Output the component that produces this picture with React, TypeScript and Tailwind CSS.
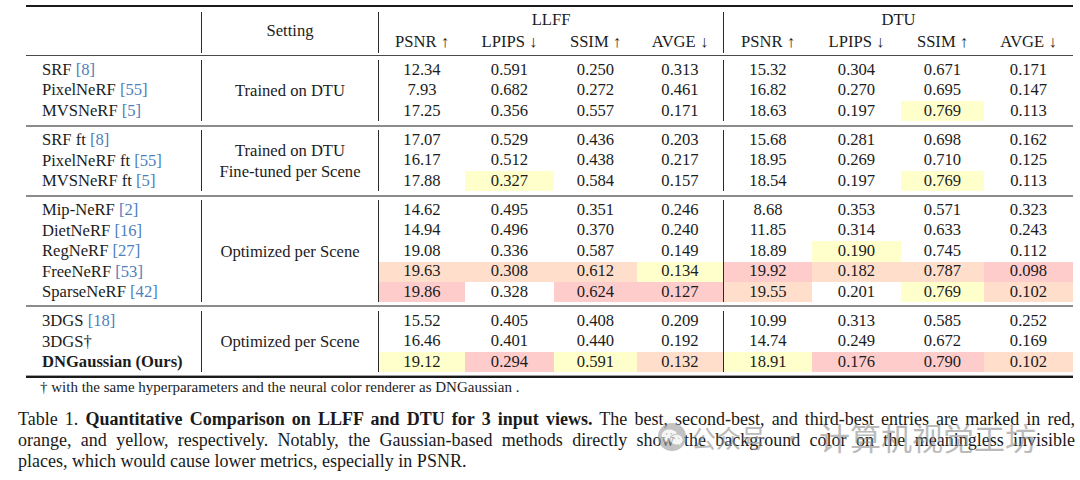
import React from "react";

type Mark = "" | "r" | "o" | "y";

const markBg: Record<Mark, string> = {
  "": "",
  r: "bg-[#ffcccc]",
  o: "bg-[#ffdfcc]",
  y: "bg-[#ffffcc]",
};

interface Row {
  name: React.ReactNode;
  llff: string[];
  dtu: string[];
}

interface Section {
  setting: React.ReactNode;
  rows: Row[];
  pt: string;
  pb: string;
}

const Ref = ({ n }: { n: string }) => <span className="text-[#4d7fbd]">[{n}]</span>;

const sections: Section[] = [
  {
    setting: "Trained on DTU",
    pt: "pt-[4px]",
    pb: "pb-[4px]",
    rows: [
      { name: <>SRF <Ref n="8" /></>, llff: ["12.34", "0.591", "0.250", "0.313"], dtu: ["15.32", "0.304", "0.671", "0.171"] },
      { name: <>PixelNeRF <Ref n="55" /></>, llff: ["7.93", "0.682", "0.272", "0.461"], dtu: ["16.82", "0.270", "0.695", "0.147"] },
      { name: <>MVSNeRF <Ref n="5" /></>, llff: ["17.25", "0.356", "0.557", "0.171"], dtu: ["18.63", "0.197", "0.769:y", "0.113"] },
    ],
  },
  {
    setting: (
      <>
        Trained on DTU
        <br />
        Fine-tuned per Scene
      </>
    ),
    pt: "pt-[3px]",
    pb: "pb-[4px]",
    rows: [
      { name: <>SRF ft <Ref n="8" /></>, llff: ["17.07", "0.529", "0.436", "0.203"], dtu: ["15.68", "0.281", "0.698", "0.162"] },
      { name: <>PixelNeRF ft <Ref n="55" /></>, llff: ["16.17", "0.512", "0.438", "0.217"], dtu: ["18.95", "0.269", "0.710", "0.125"] },
      { name: <>MVSNeRF ft <Ref n="5" /></>, llff: ["17.88", "0.327:y", "0.584", "0.157"], dtu: ["18.54", "0.197", "0.769:y", "0.113"] },
    ],
  },
  {
    setting: "Optimized per Scene",
    pt: "pt-[3px]",
    pb: "pb-[3px]",
    rows: [
      { name: <>Mip-NeRF <Ref n="2" /></>, llff: ["14.62", "0.495", "0.351", "0.246"], dtu: ["8.68", "0.353", "0.571", "0.323"] },
      { name: <>DietNeRF <Ref n="16" /></>, llff: ["14.94", "0.496", "0.370", "0.240"], dtu: ["11.85", "0.314", "0.633", "0.243"] },
      { name: <>RegNeRF <Ref n="27" /></>, llff: ["19.08", "0.336", "0.587", "0.149"], dtu: ["18.89", "0.190:y", "0.745", "0.112"] },
      { name: <>FreeNeRF <Ref n="53" /></>, llff: ["19.63:o", "0.308:o", "0.612:o", "0.134:y"], dtu: ["19.92:r", "0.182:o", "0.787:o", "0.098:r"] },
      { name: <>SparseNeRF <Ref n="42" /></>, llff: ["19.86:r", "0.328", "0.624:r", "0.127:r"], dtu: ["19.55:o", "0.201", "0.769:y", "0.102:o"] },
    ],
  },
  {
    setting: "Optimized per Scene",
    pt: "pt-[4px]",
    pb: "pb-[3px]",
    rows: [
      { name: <>3DGS <Ref n="18" /></>, llff: ["15.52", "0.405", "0.408", "0.209"], dtu: ["10.99", "0.313", "0.585", "0.252"] },
      { name: <>3DGS†</>, llff: ["16.46", "0.401", "0.440", "0.192"], dtu: ["14.74", "0.249", "0.672", "0.169"] },
      { name: <span className="font-bold">DNGaussian (Ours)</span>, llff: ["19.12:y", "0.294:r", "0.591:y", "0.132:o"], dtu: ["18.91:y", "0.176:r", "0.790:r", "0.102:o"] },
    ],
  },
];

const Cell = ({ v }: { v: string }) => {
  const [val, m] = v.split(":");
  const mark = (m || "") as Mark;
  return (
    <div className={`h-[20.4px] flex items-center justify-center ${markBg[mark]}`}>{val}</div>
  );
};

const Sep = () => <div className="w-px shrink-0 bg-[#2a2a2a]" />;
const HSep = () => <div className="w-px shrink-0 bg-[#2a2a2a] mt-[5px] mb-[2px]" />;

const SubHead = ({ cols }: { cols: string }) => (
  <div className={`grid ${cols} leading-[22px] text-center`}>
    <div>PSNR ↑</div>
    <div>LPIPS ↓</div>
    <div>SSIM ↑</div>
    <div>AVGE ↓</div>
  </div>
);

const LLFF_COLS = "grid-cols-[86px_89px_83px_86px]";
const DTU_COLS = "grid-cols-[88px_89px_83px_89px]";

function WeChatIcon() {
  return (
    <svg width="30" height="30" viewBox="0 0 32 32" className="shrink-0">
      <circle cx="16" cy="16" r="15" fill="#9a9a9a" />
      <path
        d="M13 8c-4.4 0-8 2.9-8 6.5 0 2 1.1 3.8 2.9 5l-.7 2.3 2.7-1.4c1 .3 2 .4 3.1.4h.5c-.2-.6-.3-1.2-.3-1.8 0-3.6 3.4-6.4 7.7-6.4h.4C20.5 9.9 17.1 8 13 8z"
        fill="#ffffff"
        fillOpacity="0.85"
      />
      <path
        d="M21 13.5c-3.6 0-6.5 2.4-6.5 5.3s2.9 5.3 6.5 5.3c.8 0 1.5-.1 2.2-.3l2.2 1.2-.6-2c1.6-1 2.6-2.5 2.6-4.2 0-2.9-2.9-5.3-6.4-5.3z"
        fill="#ffffff"
        fillOpacity="0.85"
      />
      <circle cx="10.3" cy="12.6" r="1" fill="#9a9a9a" />
      <circle cx="15.2" cy="12.6" r="1" fill="#9a9a9a" />
      <circle cx="18.8" cy="17.6" r="0.8" fill="#9a9a9a" />
      <circle cx="23.2" cy="17.6" r="0.8" fill="#9a9a9a" />
    </svg>
  );
}

export default function App() {
  return (
    <div className="relative w-[1080px] h-[480px] overflow-hidden bg-white text-[#1c1c1c] font-['Liberation_Serif',serif]">
      <div className="pt-[5px]">
        <div className="ml-[26px] w-[1047px] text-[16.6px]">
          {/* top rule */}
          <div className="h-[2px] bg-[#1a1a1a]" />
          {/* header */}
          <div className="flex h-[48px]">
            <div className="w-[175px] shrink-0" />
            <HSep />
            <div className="w-[176px] shrink-0 flex items-center justify-center">Setting</div>
            <HSep />
            <div className="w-[344px] shrink-0 pt-[2px]">
              <div className="text-center leading-[22px]">LLFF</div>
              <SubHead cols={LLFF_COLS} />
            </div>
            <HSep />
            <div className="w-[349px] shrink-0 pt-[2px]">
              <div className="text-center leading-[22px]">DTU</div>
              <SubHead cols={DTU_COLS} />
            </div>
          </div>
          <div className="h-px bg-[#4a4a4a]" />

          {sections.map((s, si) => (
            <div key={si}>
              <div className={`${s.pt} ${s.pb}`}>
                <div className="flex">
                  <div className="w-[175px] shrink-0 pl-[16px]">
                    {s.rows.map((r, ri) => (
                      <div key={ri} className="h-[20.4px] leading-[20.4px] whitespace-nowrap">
                        {r.name}
                      </div>
                    ))}
                  </div>
                  <Sep />
                  <div className="w-[176px] shrink-0 flex items-center justify-center text-center leading-[21px]">
                    <div>{s.setting}</div>
                  </div>
                  <Sep />
                  <div className={`w-[344px] shrink-0 grid ${LLFF_COLS}`}>
                    {s.rows.flatMap((r, ri) => r.llff.map((v, ci) => <Cell key={`${ri}-${ci}`} v={v} />))}
                  </div>
                  <Sep />
                  <div className={`w-[349px] shrink-0 grid ${DTU_COLS}`}>
                    {s.rows.flatMap((r, ri) => r.dtu.map((v, ci) => <Cell key={`${ri}-${ci}`} v={v} />))}
                  </div>
                </div>
              </div>
              {si < sections.length - 1 ? (
                <div className="h-[2px] bg-[#8c8c8c]" />
              ) : (
                <>
                  <div className="h-px bg-[#a0a0a0]" />
                  <div className="h-[2px] bg-[#1a1a1a]" />
                </>
              )}
            </div>
          ))}

          <div className="pl-[14px] text-[15px] leading-[18px] whitespace-nowrap">
            † with the same hyperparameters and the neural color renderer as DNGaussian .
          </div>
        </div>

        <div className="ml-[18px] w-[1057px] mt-[13px] text-[18px] leading-[21px] text-[#1a1a1a]">
          <div className="text-justify [text-align-last:justify] whitespace-nowrap">
            Table 1. <span className="font-bold">Quantitative Comparison on LLFF and DTU for 3 input views.</span> The
            best, second-best, and third-best entries are marked in red,
          </div>
          <div className="text-justify [text-align-last:justify] whitespace-nowrap">
            orange, and yellow, respectively. Notably, the Gaussian-based methods directly show the background color on
            the meaningless invisible
          </div>
          <div className="whitespace-nowrap">places, which would cause lower metrics, especially in PSNR.</div>
        </div>
      </div>

      {/* watermark */}
      <div className="absolute left-[657px] top-[422px] flex items-center gap-[4px] opacity-60 text-[#8f8f8f] font-['Noto_Sans_CJK_SC',sans-serif] pointer-events-none">
        <WeChatIcon />
        <span className="text-[25px] leading-[30px]">公众号</span>
        <span className="text-[25px] leading-[30px] mx-[10px]">·</span>
        <span className="text-[31px] leading-[30px] tracking-[0px]">计算机视觉工坊</span>
      </div>
    </div>
  );
}
